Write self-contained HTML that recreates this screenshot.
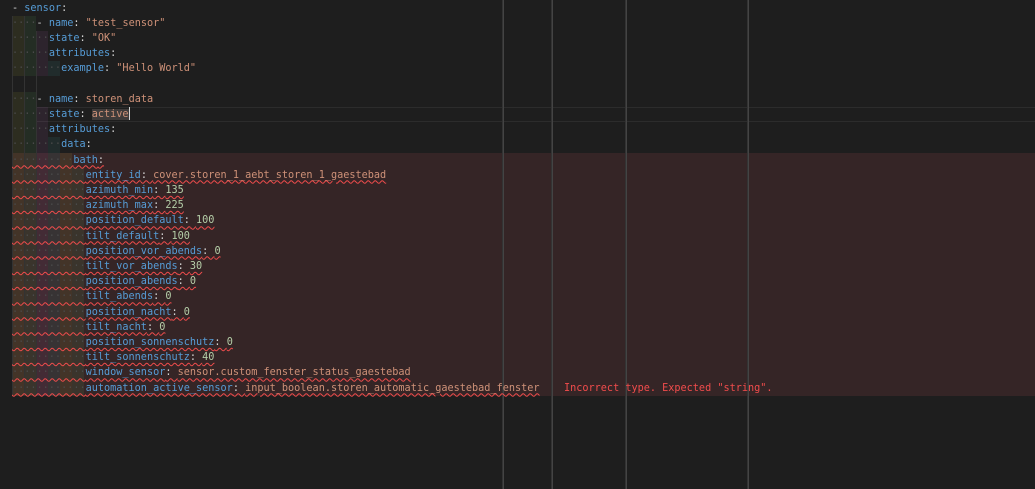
<!DOCTYPE html>
<html><head><meta charset="utf-8"><style>
html,body{margin:0;padding:0;background:#1e1e1e;width:1035px;height:489px;overflow:hidden;position:relative}
.b{position:absolute}
.l{position:absolute;left:12px;height:15.2px;line-height:15.2px;white-space:pre;font-family:"DejaVu Sans Mono","Liberation Mono",monospace;font-size:10.2px;color:#d4d4d4}
.k{color:#569cd6}.s{color:#ce9178}.n{color:#b5cea8}.d{color:#4a4a4a}
.e{text-decoration:underline wavy #f14c4c;text-decoration-thickness:1px;text-underline-offset:2px}
.r{position:absolute;top:0;height:489px;width:2px;background:#444;border-left:1px solid #333;box-sizing:border-box}
</style></head><body>
<div class="b" style="left:12px;top:152.5px;width:1023px;height:243.2px;background:#352526"></div>
<div class="b" style="left:36px;top:107px;width:999px;height:15px;border-top:1px solid #2c2c2c;border-bottom:1px solid #2c2c2c;box-sizing:border-box"></div>
<div class="b" style="left:12px;top:15.7px;width:12px;height:60.8px;background:rgba(255,255,64,.07)"></div>
<div class="b" style="left:12px;top:91.7px;width:12px;height:304px;background:rgba(255,255,64,.07)"></div>
<div class="b" style="left:24px;top:15.7px;width:12px;height:60.8px;background:rgba(127,255,127,.07)"></div>
<div class="b" style="left:24px;top:91.7px;width:12px;height:304px;background:rgba(127,255,127,.07)"></div>
<div class="b" style="left:36px;top:30.9px;width:12px;height:45.6px;background:rgba(255,127,255,.07)"></div>
<div class="b" style="left:36px;top:106.9px;width:12px;height:288.8px;background:rgba(255,127,255,.07)"></div>
<div class="b" style="left:48px;top:61.3px;width:12px;height:15.2px;background:rgba(79,236,236,.07)"></div>
<div class="b" style="left:48px;top:137.3px;width:12px;height:258.4px;background:rgba(79,236,236,.07)"></div>
<div class="b" style="left:60px;top:152.5px;width:12px;height:243.2px;background:rgba(255,255,64,.07)"></div>
<div class="b" style="left:72px;top:167.7px;width:12px;height:228px;background:rgba(127,255,127,.07)"></div>
<div class="b" style="left:12px;top:15.7px;width:1px;height:380px;background:#333"></div>
<div class="b" style="left:24px;top:15.7px;width:1px;height:380px;background:#333"></div>
<div class="b" style="left:36px;top:30.9px;width:1px;height:365px;background:#333"></div>
<div class="r" style="left:502px"></div>
<div class="r" style="left:551px"></div>
<div class="r" style="left:625px"></div>
<div class="r" style="left:747px"></div>

<div class="l" style="top:0.5px">- <span class="k">sensor</span>:</div>
<div class="l" style="top:15.7px"><span class="d">····</span>- <span class="k">name</span>: <span class="s">"test_sensor"</span></div>
<div class="l" style="top:30.9px"><span class="d">······</span><span class="k">state</span>: <span class="s">"OK"</span></div>
<div class="l" style="top:46.1px"><span class="d">······</span><span class="k">attributes</span>:</div>
<div class="l" style="top:61.3px"><span class="d">········</span><span class="k">example</span>: <span class="s">"Hello World"</span></div>
<div class="l" style="top:91.7px"><span class="d">····</span>- <span class="k">name</span>: <span class="s">storen_data</span></div>
<div class="l" style="top:106.9px"><span class="d">······</span><span class="k">state</span>: <span class="s" style="background:#3f3b3a">active</span><span style="display:inline-block;width:1px;height:13px;background:#d4d4d4;vertical-align:middle"></span></div>
<div class="l" style="top:122.1px"><span class="d">······</span><span class="k">attributes</span>:</div>
<div class="l" style="top:137.3px"><span class="d">········</span><span class="k">data</span>:</div>
<div class="l" style="top:152.5px"><span class="e"><span class="d">··········</span><span class="k">bath</span>:</span></div>
<div class="l" style="top:167.7px"><span class="e"><span class="d">············</span><span class="k">entity_id</span>: <span class="s">cover.storen_1_aebt_storen_1_gaestebad</span></span></div>
<div class="l" style="top:182.9px"><span class="e"><span class="d">············</span><span class="k">azimuth_min</span>: <span class="n">135</span></span></div>
<div class="l" style="top:198.1px"><span class="e"><span class="d">············</span><span class="k">azimuth_max</span>: <span class="n">225</span></span></div>
<div class="l" style="top:213.3px"><span class="e"><span class="d">············</span><span class="k">position_default</span>: <span class="n">100</span></span></div>
<div class="l" style="top:228.5px"><span class="e"><span class="d">············</span><span class="k">tilt_default</span>: <span class="n">100</span></span></div>
<div class="l" style="top:243.7px"><span class="e"><span class="d">············</span><span class="k">position_vor_abends</span>: <span class="n">0</span></span></div>
<div class="l" style="top:258.9px"><span class="e"><span class="d">············</span><span class="k">tilt_vor_abends</span>: <span class="n">30</span></span></div>
<div class="l" style="top:274.1px"><span class="e"><span class="d">············</span><span class="k">position_abends</span>: <span class="n">0</span></span></div>
<div class="l" style="top:289.3px"><span class="e"><span class="d">············</span><span class="k">tilt_abends</span>: <span class="n">0</span></span></div>
<div class="l" style="top:304.5px"><span class="e"><span class="d">············</span><span class="k">position_nacht</span>: <span class="n">0</span></span></div>
<div class="l" style="top:319.7px"><span class="e"><span class="d">············</span><span class="k">tilt_nacht</span>: <span class="n">0</span></span></div>
<div class="l" style="top:334.9px"><span class="e"><span class="d">············</span><span class="k">position_sonnenschutz</span>: <span class="n">0</span></span></div>
<div class="l" style="top:350.1px"><span class="e"><span class="d">············</span><span class="k">tilt_sonnenschutz</span>: <span class="n">40</span></span></div>
<div class="l" style="top:365.3px"><span class="e"><span class="d">············</span><span class="k">window_sensor</span>: <span class="s">sensor.custom_fenster_status_gaestebad</span></span></div>
<div class="l" style="top:380.5px"><span class="e"><span class="d">············</span><span class="k">automation_active_sensor</span>: <span class="s">input_boolean.storen_automatic_gaestebad_fenster</span></span></div>
<div class="l" style="top:380.5px;left:564px;color:#f14c4c">Incorrect type. Expected "string".</div>
</body></html>
